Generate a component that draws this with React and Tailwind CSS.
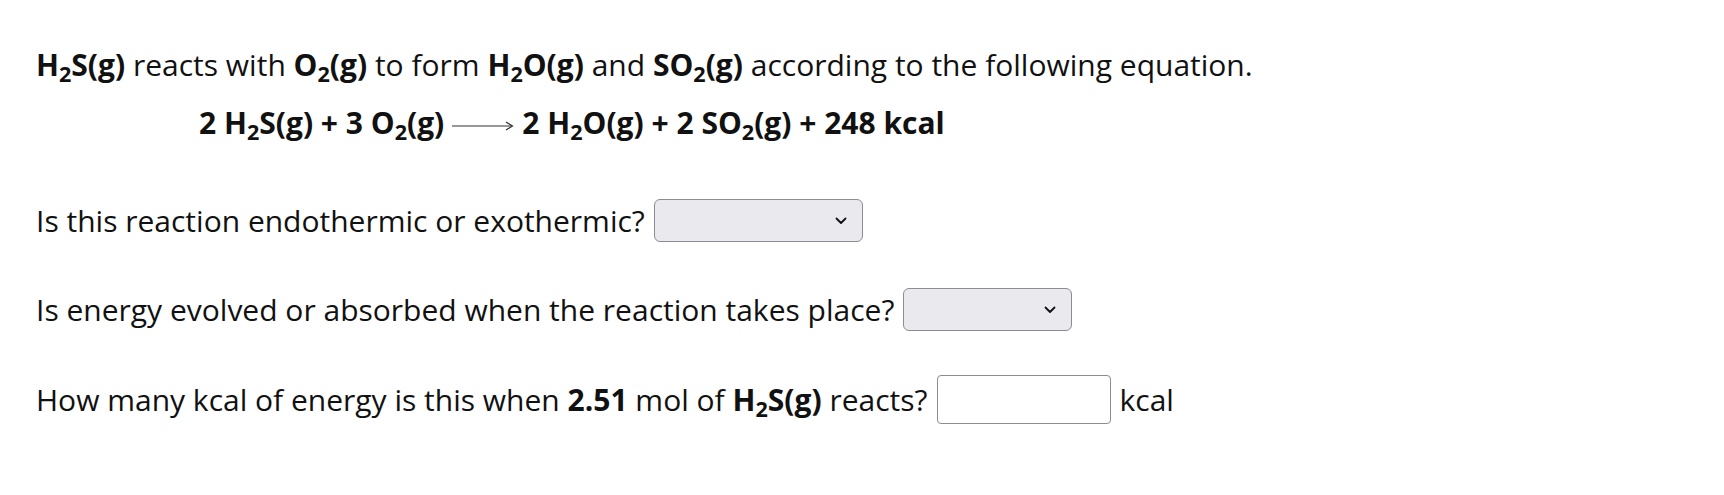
import React from "react";

function Sub({ children }) {
  return <span className="inline-block text-[0.72em] relative top-[0.28em] leading-none">{children}</span>;
}

function Chevron() {
  return (
    <svg width="12" height="8" viewBox="0 0 12 8" className="absolute right-[15px] top-1/2 -translate-y-1/2">
      <path d="M1.5 1.5 L6 6 L10.5 1.5" fill="none" stroke="#111" strokeWidth="1.8" strokeLinecap="round" strokeLinejoin="round" />
    </svg>
  );
}

function Select({ w }) {
  return (
    <span
      className={`relative inline-block shrink-0 h-[43px] rounded-[6px] border-[1.5px] border-[#8c8c96] bg-[#e9e9ee] ${w}`}
    >
      <Chevron />
    </span>
  );
}

export default function App() {
  return (
    <div className="w-[1724px] h-[495px] bg-white text-[#111] font-['Open_Sans',sans-serif] text-[30px] pl-[36px] pt-[46px]">
      <div className="h-[36px] flex items-center whitespace-nowrap">
        <span>
          <b>H<Sub>2</Sub>S(g)</b> reacts with <b>O<Sub>2</Sub>(g)</b> to form <b>H<Sub>2</Sub>O(g)</b> and{" "}
          <b>SO<Sub>2</Sub>(g)</b> according to the following equation.
        </span>
      </div>
      <div className="h-[36px] mt-[22px] pl-[163px] flex items-center whitespace-nowrap font-bold">
        <span>2 H<Sub>2</Sub>S(g) + 3 O<Sub>2</Sub>(g)</span>
        <svg width="62" height="14" viewBox="0 0 62 14" className="ml-[8px] mr-[8px] mt-[8px]">
          <line x1="0" y1="7" x2="60" y2="7" stroke="#333" strokeWidth="1.2" />
          <path d="M54 3 L60.5 7 L54 11" fill="none" stroke="#333" strokeWidth="1.2" />
        </svg>
        <span>2 H<Sub>2</Sub>O(g) + 2 SO<Sub>2</Sub>(g) + 248 kcal</span>
      </div>
      <div className="mt-[58px] flex items-center gap-[9px] whitespace-nowrap">
        <span>Is this reaction endothermic or exothermic?</span>
        <Select w="w-[209px]" />
      </div>
      <div className="mt-[44px] flex items-center gap-[9px] whitespace-nowrap">
        <span>Is energy evolved or absorbed when the reaction takes place?</span>
        <Select w="w-[169px]" />
      </div>
      <div className="mt-[43px] flex items-center whitespace-nowrap">
        <span>
          How many kcal of energy is this when <b>2.51</b> mol of <b>H<Sub>2</Sub>S(g)</b> reacts?
        </span>
        <span className="ml-[9px] inline-block shrink-0 w-[174px] h-[49px] rounded-[4px] border-[1.5px] border-[#8c8c96] bg-white" />
        <span className="ml-[9px]">kcal</span>
      </div>
    </div>
  );
}
